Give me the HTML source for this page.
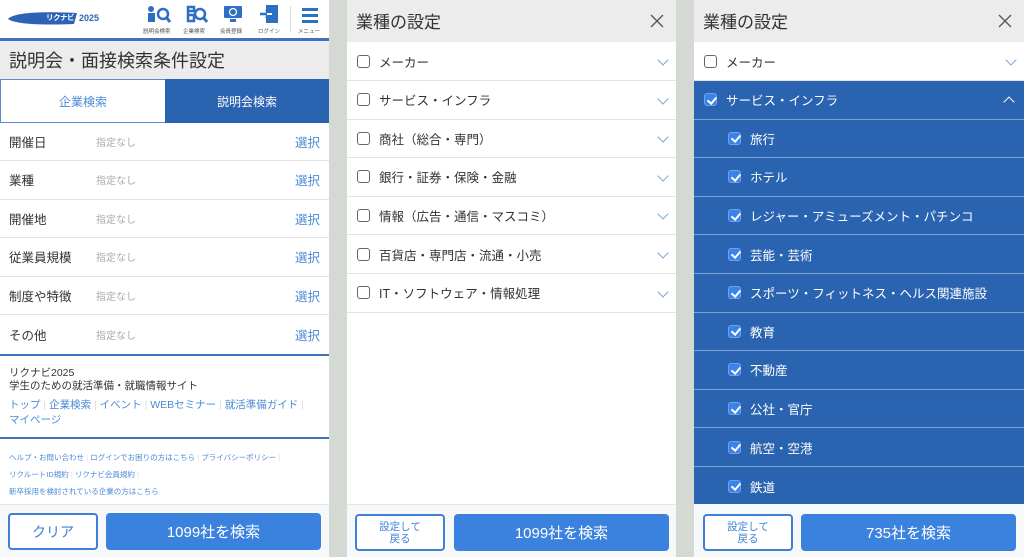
<!DOCTYPE html>
<html><head><meta charset="utf-8"><style>
*{margin:0;padding:0;box-sizing:border-box}
body{width:1024px;height:557px;overflow:hidden;background:#d5d9d3;font-family:"Liberation Sans","Noto Sans CJK JP",sans-serif;position:relative;color:#333}
.p{position:absolute;top:0;height:557px;background:#fff;overflow:hidden}
.a{position:absolute}
.row{position:absolute;left:0;right:0;height:39px;border-bottom:1px solid #e4e4e4;font-size:12.5px;display:flex;align-items:center}
.cb{width:13px;height:13px;border:1.3px solid #666;border-radius:3px;margin-right:9px;background:#fff;flex:none}
.chev{position:absolute;right:9px;top:14px;width:8px;height:8px;border-right:1.2px solid #7aa3d8;border-bottom:1.2px solid #7aa3d8;transform:rotate(45deg)}
.bw{position:absolute;border:2px solid #3f7fd6;border-radius:4px;background:#fff;color:#3f7fd6;display:flex;align-items:center;justify-content:center;text-align:center}
.bb{position:absolute;background:#3b82de;border-radius:4px;color:#fff;display:flex;align-items:center;justify-content:center;font-size:15px}
.lnk{color:#4a8ad6}
.brow{position:absolute;left:0;right:0;height:38.6px;border-bottom:1px solid #7da2d6;background:#2a63b0;color:#fff;font-size:12.5px;display:flex;align-items:center}
.cbc{width:13px;height:13px;background:#3b82ea;border-radius:3px;margin-right:9px;position:relative;flex:none;border:1px solid #6ea2f0}
.cbc:after{content:"";position:absolute;left:3.5px;top:0.5px;width:3.5px;height:7px;border-right:2px solid #fff;border-bottom:2px solid #fff;transform:rotate(40deg)}
.x{position:absolute;right:12px;top:14px}
</style></head><body>

<!-- LEFT -->
<div class="p" style="left:0;width:329px">
 <svg class="a" style="left:7px;top:9px" width="72" height="18"><path d="M1 10 C6 4 30 2 70 4 L67 15 C40 16 10 16 1 10Z" fill="#2d63b4"/></svg>
 <div class="a" style="left:46px;top:12px;font-size:7.5px;font-weight:bold;color:#fff;white-space:nowrap;letter-spacing:-0.5px">リクナビ</div>
 <div class="a" style="left:79px;top:13px;font-size:9px;font-weight:bold;color:#2d63b4">2025</div>
 <svg class="a" style="left:146px;top:5px" width="26" height="18"><circle cx="5" cy="4" r="3" fill="#2d6fc4"/><rect x="2" y="8" width="7" height="9" fill="#2d6fc4"/><circle cx="17" cy="9" r="5" fill="none" stroke="#2d6fc4" stroke-width="2.5"/><path d="M20 12 L24 17" stroke="#2d6fc4" stroke-width="3"/></svg>
 <svg class="a" style="left:186px;top:5px" width="22" height="18"><path d="M2 2H8V6H2V10H8V16H2Z" fill="none" stroke="#2d6fc4" stroke-width="2.5"/><circle cx="14" cy="9" r="5" fill="none" stroke="#2d6fc4" stroke-width="2.5"/><path d="M17 12 L21 17" stroke="#2d6fc4" stroke-width="3"/></svg>
 <svg class="a" style="left:222px;top:5px" width="22" height="18"><rect x="2" y="1" width="18" height="12" rx="1" fill="#2d6fc4"/><circle cx="11" cy="7" r="3.5" fill="none" stroke="#fff" stroke-width="1.3"/><rect x="8" y="14" width="6" height="3" fill="#2d6fc4"/></svg>
 <svg class="a" style="left:259px;top:4px" width="20" height="20"><rect x="7" y="1" width="12" height="18" fill="#2d6fc4"/><path d="M1 10 H11 M7 6 L11 10 L7 14" stroke="#2d6fc4" stroke-width="2.5" fill="none"/><path d="M8 10 H13" stroke="#fff" stroke-width="2"/></svg>
 <div class="a" style="left:290px;top:6px;width:1px;height:26px;background:#ddd"></div>
 <div class="a" style="left:302px;top:8px;width:16px;height:2.5px;background:#2d6fc4;box-shadow:0 6px 0 #2d6fc4,0 12px 0 #2d6fc4"></div>
 <div class="a" style="left:140px;top:27px;width:190px;font-size:5.5px;color:#555;">
  <span class="a" style="left:3px">説明会検索</span><span class="a" style="left:43px">企業検索</span><span class="a" style="left:80px">会員登録</span><span class="a" style="left:118px">ログイン</span><span class="a" style="left:158px">メニュー</span></div>
 <div class="a" style="left:0;top:38px;width:329px;height:3px;background:#3f72c2"></div>
 <div class="a" style="left:0;top:41px;width:329px;height:38px;background:#ececec;font-size:18px;padding:6px 0 0 9px;color:#333">説明会・面接検索条件設定</div>
 <div class="a" style="left:0;top:79px;width:165px;height:44px;border:1.5px solid #5c8cd0;border-right:none;background:#fff;color:#4a8ad6;font-size:12px;display:flex;align-items:center;justify-content:center">企業検索</div>
 <div class="a" style="left:165px;top:79px;width:164px;height:44px;background:#2a63b0;color:#fff;font-size:12px;display:flex;align-items:center;justify-content:center">説明会検索</div>
 <div class="a" style="left:0;top:122px;width:329px">
  <div class="row" style="top:0"><span style="margin-left:9px;width:87px">開催日</span><span style="color:#aaa;font-size:10px">指定なし</span><span class="lnk" style="position:absolute;right:9px">選択</span></div>
  <div class="row" style="top:38.6px"><span style="margin-left:9px;width:87px">業種</span><span style="color:#aaa;font-size:10px">指定なし</span><span class="lnk" style="position:absolute;right:9px">選択</span></div>
  <div class="row" style="top:77.2px"><span style="margin-left:9px;width:87px">開催地</span><span style="color:#aaa;font-size:10px">指定なし</span><span class="lnk" style="position:absolute;right:9px">選択</span></div>
  <div class="row" style="top:115.8px"><span style="margin-left:9px;width:87px">従業員規模</span><span style="color:#aaa;font-size:10px">指定なし</span><span class="lnk" style="position:absolute;right:9px">選択</span></div>
  <div class="row" style="top:154.4px"><span style="margin-left:9px;width:87px">制度や特徴</span><span style="color:#aaa;font-size:10px">指定なし</span><span class="lnk" style="position:absolute;right:9px">選択</span></div>
  <div class="row" style="top:193px;border:none"><span style="margin-left:9px;width:87px">その他</span><span style="color:#aaa;font-size:10px">指定なし</span><span class="lnk" style="position:absolute;right:9px">選択</span></div>
 </div>
 <div class="a" style="left:0;top:354px;width:329px;height:2px;background:#3f72c2"></div>
 <div class="a" style="left:9px;top:367px;font-size:10.5px;line-height:12.5px;color:#333">リクナビ2025<br>学生のための就活準備・就職情報サイト</div>
 <div class="a lnk" style="left:9px;top:398px;font-size:10.5px;line-height:15px;width:315px">トップ <span style="color:#ddd">|</span> 企業検索 <span style="color:#ddd">|</span> イベント <span style="color:#ddd">|</span> WEBセミナー <span style="color:#ddd">|</span> 就活準備ガイド <span style="color:#ddd">|</span><br>マイページ</div>
 <div class="a" style="left:0;top:437px;width:329px;height:2px;background:#3f72c2"></div>
 <div class="a lnk" style="left:9px;top:449px;font-size:7.5px;line-height:17px;width:320px">ヘルプ・お問い合わせ <span style="color:#ddd">|</span> ログインでお困りの方はこちら <span style="color:#ddd">|</span> プライバシーポリシー <span style="color:#ddd">|</span><br>リクルートID規約 <span style="color:#ddd">|</span> リクナビ会員規約 <span style="color:#ddd">|</span><br>新卒採用を検討されている企業の方はこちら</div>
 <div class="a" style="left:0;top:504px;width:329px;height:53px;background:#f7f8fa;border-top:1px solid #e4e4e4"></div>
 <div class="bw" style="left:8px;top:513px;width:90px;height:37px;font-size:14px">クリア</div>
 <div class="bb" style="left:106px;top:513px;width:215px;height:37px">1099社を検索</div>
</div>

<!-- MIDDLE -->
<div class="p" style="left:347px;width:329px">
 <div class="a" style="left:0;top:0;width:329px;height:42px;background:#ececec;font-size:17px;padding:8px 0 0 9px">業種の設定</div>
 <svg class="x" width="14" height="14"><path d="M1 1L13 13M13 1L1 13" stroke="#555" stroke-width="1.3"/></svg>
 <div class="a" style="left:0;top:42px;width:329px">
  <div class="row" style="top:0;padding-left:10px"><div class="cb"></div>メーカー<div class="chev"></div></div>
  <div class="row" style="top:38.6px;padding-left:10px"><div class="cb"></div>サービス・インフラ<div class="chev"></div></div>
  <div class="row" style="top:77.2px;padding-left:10px"><div class="cb"></div>商社（総合・専門）<div class="chev"></div></div>
  <div class="row" style="top:115.8px;padding-left:10px"><div class="cb"></div>銀行・証券・保険・金融<div class="chev"></div></div>
  <div class="row" style="top:154.4px;padding-left:10px"><div class="cb"></div>情報（広告・通信・マスコミ）<div class="chev"></div></div>
  <div class="row" style="top:193px;padding-left:10px"><div class="cb"></div>百貨店・専門店・流通・小売<div class="chev"></div></div>
  <div class="row" style="top:231.6px;padding-left:10px"><div class="cb"></div>IT・ソフトウェア・情報処理<div class="chev"></div></div>
 </div>
 <div class="a" style="left:0;top:504px;width:329px;height:53px;background:#f7f8fa;border-top:1px solid #e4e4e4"></div>
 <div class="bw" style="left:8px;top:514px;width:90px;height:37px;font-size:10.5px;line-height:12px">設定して<br>戻る</div>
 <div class="bb" style="left:107px;top:514px;width:215px;height:37px">1099社を検索</div>
</div>

<!-- RIGHT -->
<div class="p" style="left:694px;width:330px">
 <div class="a" style="left:0;top:0;width:330px;height:42px;background:#ececec;font-size:17px;padding:8px 0 0 9px">業種の設定</div>
 <svg class="x" width="14" height="14"><path d="M1 1L13 13M13 1L1 13" stroke="#555" stroke-width="1.3"/></svg>
 <div class="row" style="top:42px;padding-left:10px"><div class="cb"></div>メーカー<div class="chev"></div></div>
 <div class="a" style="left:0;top:81px;width:330px;height:423px;background:#2a63b0"></div>
 <div class="a" style="left:0;top:81px;width:330px">
  <div class="brow" style="top:0;padding-left:10px"><div class="cbc"></div>サービス・インフラ<div class="a" style="right:11px;top:17px;width:8px;height:8px;border-left:1.2px solid #fff;border-top:1.2px solid #fff;transform:rotate(45deg)"></div></div>
  <div class="brow" style="top:38.6px;padding-left:34px"><div class="cbc"></div>旅行</div>
  <div class="brow" style="top:77.2px;padding-left:34px"><div class="cbc"></div>ホテル</div>
  <div class="brow" style="top:115.8px;padding-left:34px"><div class="cbc"></div>レジャー・アミューズメント・パチンコ</div>
  <div class="brow" style="top:154.4px;padding-left:34px"><div class="cbc"></div>芸能・芸術</div>
  <div class="brow" style="top:193px;padding-left:34px"><div class="cbc"></div>スポーツ・フィットネス・ヘルス関連施設</div>
  <div class="brow" style="top:231.6px;padding-left:34px"><div class="cbc"></div>教育</div>
  <div class="brow" style="top:270.2px;padding-left:34px"><div class="cbc"></div>不動産</div>
  <div class="brow" style="top:308.8px;padding-left:34px"><div class="cbc"></div>公社・官庁</div>
  <div class="brow" style="top:347.4px;padding-left:34px"><div class="cbc"></div>航空・空港</div>
  <div class="brow" style="top:386px;padding-left:34px;border:none"><div class="cbc"></div>鉄道</div>
 </div>
 <div class="a" style="left:0;top:504px;width:330px;height:53px;background:#f7f8fa"></div>
 <div class="bw" style="left:9px;top:514px;width:90px;height:37px;font-size:10.5px;line-height:12px">設定して<br>戻る</div>
 <div class="bb" style="left:107px;top:514px;width:215px;height:37px">735社を検索</div>
</div>
</body></html>
